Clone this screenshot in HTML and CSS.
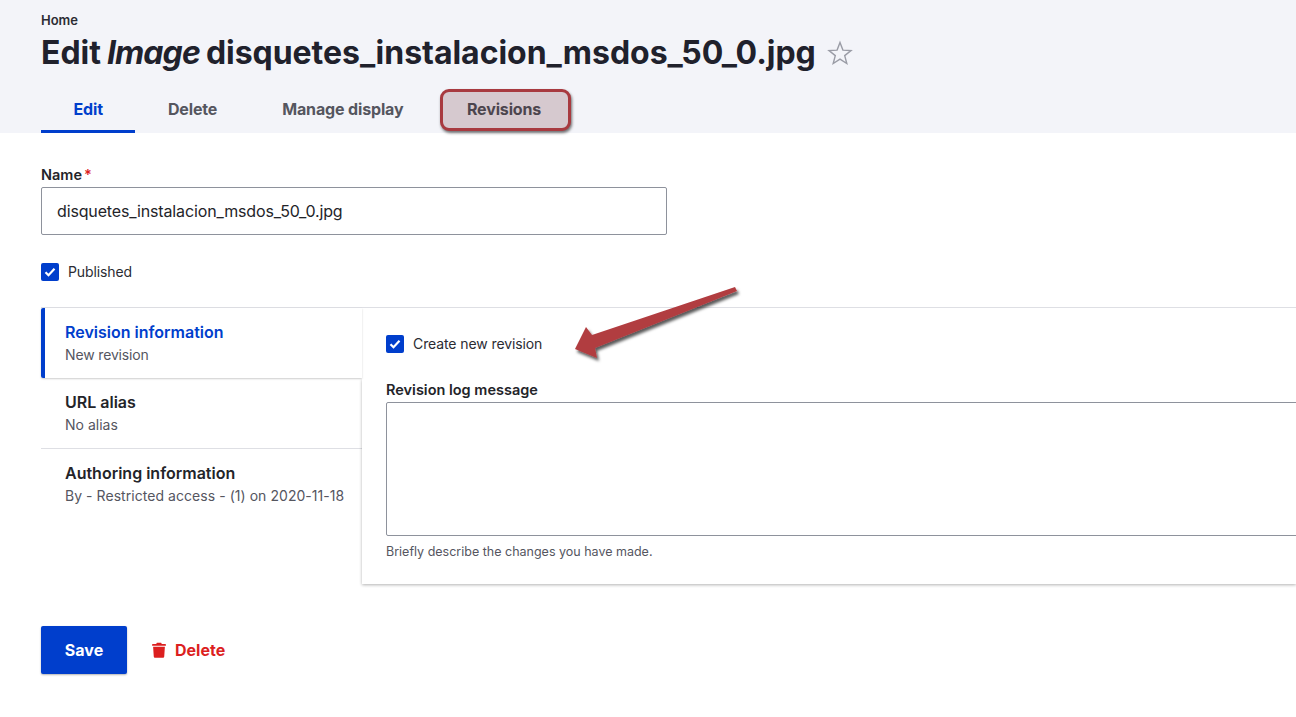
FILE: index.html
```html
<!DOCTYPE html>
<html>
<head>
    <title>Edit Image</title>
    <meta charset="utf-8">
    <link rel="stylesheet" href="styles.css">
</head>
<body>
    <header class="page-header">
        <div class="breadcrumb">Home</div>
        <h1 class="page-title">Edit <em>Image</em> disquetes_instalacion_msdos_50_0.jpg
            <svg class="star" width="26" height="26" viewBox="0 0 26 26"><path d="M13 2.5l2.9 7.6 8.1.4-6.3 5.1 2.1 7.9L13 19.1l-6.8 4.4 2.1-7.9L2 10.5l8.1-.4z" fill="none" stroke="#9a9ca6" stroke-width="1.4"/></svg>
        </h1>
        <nav class="tabs">
            <a class="tab tab-active">Edit</a>
            <a class="tab">Delete</a>
            <a class="tab">Manage display</a>
            <a class="tab tab-marked">Revisions</a>
        </nav>
    </header>

    <main class="content">
        <label class="field-label">Name<span class="required">*</span></label>
        <div class="text-input">disquetes_instalacion_msdos_50_0.jpg</div>

        <div class="check-row published">
            <span class="checkbox"><svg width="12" height="10" viewBox="0 0 12 10"><path d="M1.5 5.2l3 3 6-6.4" fill="none" stroke="#fff" stroke-width="2.2"/></svg></span>
            <span>Published</span>
        </div>

        <div class="vertical-tabs">
            <div class="vt-menu">
                <div class="vt-item vt-active">
                    <strong>Revision information</strong>
                    <span>New revision</span>
                </div>
                <div class="vt-item vt-second">
                    <strong>URL alias</strong>
                    <span>No alias</span>
                </div>
                <div class="vt-item vt-last">
                    <strong>Authoring information</strong>
                    <span>By - Restricted access - (1) on 2020-11-18</span>
                </div>
            </div>
            <div class="vt-pane">
                <div class="check-row">
                    <span class="checkbox"><svg width="12" height="10" viewBox="0 0 12 10"><path d="M1.5 5.2l3 3 6-6.4" fill="none" stroke="#fff" stroke-width="2.2"/></svg></span>
                    <span>Create new revision</span>
                </div>
                <label class="field-label log-label">Revision log message</label>
                <div class="textarea"></div>
                <div class="hint">Briefly describe the changes you have made.</div>
            </div>
        </div>

        <div class="actions">
            <button class="btn-save">Save</button>
            <a class="link-delete">
                <svg width="14" height="16" viewBox="0 0 15 17"><path d="M5.2 0.6h4.6l.7 1.4h3.7c.4 0 .7.3.7.7v.9c0 .2-.2.4-.4.4H.5c-.2 0-.4-.2-.4-.4v-.9c0-.4.3-.7.7-.7h3.7zM1.2 5h12.6l-.7 10.5c-.1.8-.7 1.4-1.5 1.4H3.4c-.8 0-1.4-.6-1.5-1.4z" fill="#dc1f1f"/></svg>
                Delete
            </a>
        </div>
    </main>

    <!-- arrow drawn on top of the screenshot -->
    <svg class="arrow" width="190" height="100" viewBox="0 0 190 100">
        <defs>
            <filter id="arrow-shadow" x="-10%" y="-20%" width="125%" height="150%">
                <feDropShadow dx="2" dy="3" stdDeviation="1.5" flood-color="#000" flood-opacity="0.65"/>
            </filter>
        </defs>
        <path d="M163 2L165 6L23 63L25 73L3 64L14 42L20 50Z" fill="#b13c40" filter="url(#arrow-shadow)"/>
    </svg>
</body>
</html>
```

FILE: styles.css
```css
html, body {
    margin: 0;
    padding: 0;
}
body {
    font-family: Inter, "Liberation Sans", sans-serif;
    color: #232429;
    background: #fff;
    height: 717px;
    overflow: hidden;
    position: relative;
    font-size: 14px;
}
.page-header {
    background-color: #f3f4f9;
    height: 133px;
    padding: 12px 0 0 41px;
    box-sizing: border-box;
    isolation: isolate;
}
.breadcrumb {
    font-size: 13px;
    font-weight: 600;
    line-height: 16px;
    color: #2b2c33;
}
.page-title {
    margin: 5px 0 0;
    font-size: 32px;
    line-height: 40px;
    font-weight: 700;
    letter-spacing: -0.03px;
    color: #20212c;
    white-space: nowrap;
    display: flex;
    align-items: center;
}
.page-title em {
    margin: 0 6px 0 6px;
    letter-spacing: -0.9px;
}
.star {
    margin-left: 11px;
}
.tabs {
    display: flex;
    margin-top: 16px;
}
.tab {
    padding: 0 32.5px;
    height: 44px;
    line-height: 41px;
    font-size: 16px;
    font-weight: 700;
    letter-spacing: -0.15px;
    color: #55565f;
    box-sizing: border-box;
}
.tab-active {
    color: #003ecc;
    border-bottom: 3px solid #003ecc;
}
.tab-marked {
    position: relative;
    margin-left: 4px;
    padding: 0 30px 0 27px;
    color: #4c454e;
}
.tab-marked::before {
    content: "";
    position: absolute;
    left: 0;
    top: 0;
    right: 0;
    height: 36px;
    border: 3px solid #a83a40;
    border-radius: 9px;
    background: #d6c9cf;
    box-shadow: 1px 2px 3px rgba(0, 0, 0, 0.55);
    z-index: -1;
}
.content {
    padding: 32px 0 0 41px;
}
.field-label {
    display: block;
    font-size: 14.5px;
    font-weight: 600;
    line-height: 20px;
    color: #232429;
}
.required {
    color: #dc1f1f;
    margin-left: 2px;
}
.text-input {
    width: 626px;
    height: 48px;
    margin-top: 2px;
    box-sizing: border-box;
    border: 1px solid #8e929c;
    border-radius: 2px;
    padding: 0 15px;
    line-height: 46px;
    font-size: 16px;
    letter-spacing: -0.14px;
    color: #232429;
}
.check-row {
    display: flex;
    align-items: center;
    gap: 9px;
    line-height: 18px;
    letter-spacing: -0.1px;
    color: #2b2c33;
}
.published {
    margin-top: 28px;
}
.checkbox {
    width: 18px;
    height: 18px;
    background: #003ecc;
    border-radius: 2px;
    display: flex;
    align-items: center;
    justify-content: center;
}
.vertical-tabs {
    display: flex;
    margin-top: 26px;
    border-top: 1px solid #dedfe4;
}
.vt-menu {
    width: 321px;
    flex: none;
}
.vt-item {
    height: 70px;
    padding: 14px 0 0 24px;
    box-sizing: border-box;
    border-bottom: 1px solid #dedfe4;
}
.vt-item strong {
    display: block;
    font-size: 16px;
    font-weight: 600;
    line-height: 21px;
    color: #232429;
}
.vt-item span {
    display: block;
    margin-top: 3px;
    font-size: 14px;
    line-height: 18px;
    color: #55565f;
    white-space: nowrap;
}
.vt-active {
    border-left: 4px solid #003ecc;
    border-bottom: 0;
    border-radius: 2px 0 0 2px;
    padding-left: 20px;
    box-shadow: 0 1px 2px rgba(0, 0, 0, 0.2);
}
.vt-active strong {
    color: #003ecc;
}
.vt-active span {
    letter-spacing: -0.15px;
}
.vt-second {
    height: 71px;
}
.vt-last {
    border-bottom: 0;
}
.vt-last span {
    letter-spacing: 0.05px;
}
.vt-pane {
    flex: 1;
    height: 276px;
    padding: 27px 0 0 24px;
    box-sizing: border-box;
    position: relative;
}
/* shadow only starts under the active menu item */
.vt-pane::before {
    content: "";
    position: absolute;
    left: 0;
    right: 0;
    top: 71px;
    bottom: 0;
    box-shadow: 0 1px 3px rgba(0, 0, 0, 0.3);
    clip-path: inset(0 -10px -10px -10px);
}
.log-label {
    margin-top: 27px;
    position: relative;
}
.textarea {
    height: 134px;
    margin-top: 2px;
    margin-right: -10px;
    box-sizing: border-box;
    border: 1px solid #8e929c;
    border-radius: 2px;
    position: relative;
    background: #fff;
}
.hint {
    margin-top: 8px;
    font-size: 12.5px;
    line-height: 16px;
    color: #55565f;
    position: relative;
}
.actions {
    display: flex;
    align-items: center;
    gap: 25px;
    margin-top: 42px;
}
.btn-save {
    width: 86px;
    height: 48px;
    border: none;
    border-radius: 2px;
    background-color: #003ecc;
    color: #fff;
    font-family: inherit;
    font-size: 16px;
    font-weight: 700;
    box-shadow: 0 1px 2px rgba(0, 0, 0, 0.3);
}
.link-delete {
    display: flex;
    align-items: center;
    gap: 9px;
    color: #dc1f1f;
    font-size: 16px;
    font-weight: 700;
}
.arrow {
    position: absolute;
    left: 572px;
    top: 285px;
}
```
